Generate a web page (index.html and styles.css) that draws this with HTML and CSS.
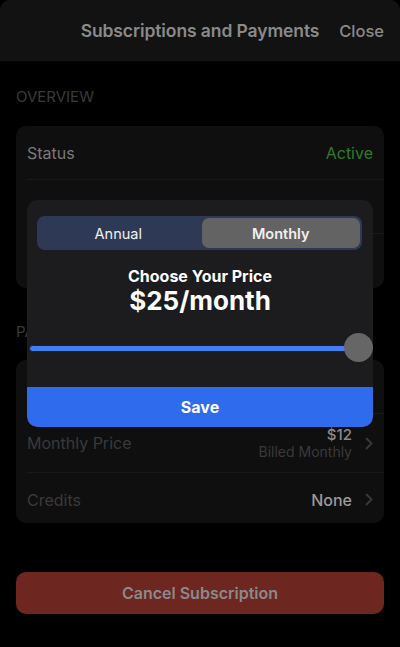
FILE: index.html
```html
<!DOCTYPE html>
<html>
<head>
<meta charset="utf-8">
<link rel="stylesheet" href="styles.css">
</head>
<body>
<div class="screen">
  <header class="topbar">
    <span></span>
    <h1 class="title">Subscriptions and Payments</h1>
    <span class="close">Close</span>
  </header>
  <main class="content">
    <div class="section-label">OVERVIEW</div>
    <div class="card">
      <div class="row"><span class="label">Status</span><span class="active">Active</span></div>
      <div class="row covered"><span class="label">Plan</span><span class="value">Premium</span></div>
      <div class="row covered"><span class="label">Renews</span><span class="value">Jan 1</span></div>
    </div>
    <div class="section-label sec2">PAYMENT</div>
    <div class="card">
      <div class="row covered"><span class="label dim">Payment Method</span><span class="value">Visa</span></div>
      <div class="row price-row">
        <span class="label dim">Monthly Price</span>
        <span class="right">
          <span class="stack"><span class="amount">$12</span><span class="billed">Billed Monthly</span></span>
          <svg class="chev" width="8" height="13" viewBox="0 0 8 13"><path d="M1.5 1.5 L6.5 6.5 L1.5 11.5" fill="none" stroke="#3a3a3a" stroke-width="1.8" stroke-linecap="round" stroke-linejoin="round"/></svg>
        </span>
      </div>
      <div class="row last-row">
        <span class="label dim">Credits</span>
        <span class="right">
          <span class="none">None</span>
          <svg class="chev" width="8" height="13" viewBox="0 0 8 13"><path d="M1.5 1.5 L6.5 6.5 L1.5 11.5" fill="none" stroke="#3a3a3a" stroke-width="1.8" stroke-linecap="round" stroke-linejoin="round"/></svg>
        </span>
      </div>
    </div>
    <button class="cancel">Cancel Subscription</button>
  </main>

  <div class="modal">
    <div class="segmented">
      <div class="seg">Annual</div>
      <div class="seg selected">Monthly</div>
    </div>
    <div class="choose">Choose Your Price</div>
    <div class="price">$25/month</div>
    <div class="slider">
      <div class="track"></div>
      <div class="thumb"></div>
    </div>
    <button class="save">Save</button>
  </div>
</div>
</body>
</html>
```
FILE: styles.css
```css
* { box-sizing: border-box; }
html, body {
  margin: 0;
  padding: 0;
  background: #000;
}
body {
  width: 400px;
  height: 647px;
  overflow: hidden;
  font-family: Inter, "Liberation Sans", sans-serif;
}
.screen {
  position: relative;
  width: 400px;
  height: 647px;
  background: #000;
}
.topbar {
  height: 61px;
  background: #121212;
  border-radius: 10px 10px 0 0;
  display: grid;
  grid-template-columns: 1fr auto 1fr;
  align-items: center;
  padding: 0 16px;
}
.title {
  margin: 0;
  font-size: 17.5px;
  font-weight: 600;
  color: #8a8a8a;
  letter-spacing: -0.1px;
}
.close {
  justify-self: end;
  font-size: 16.5px;
  color: #8a8a8a;
  font-weight: 500;
}
.content {
  padding: 0 16px;
}
.section-label {
  font-size: 15px;
  color: #3a3a3a;
  padding: 27px 0 0 0;
  height: 65px;
  line-height: 18px;
}
.sec2 { height: 72px; padding-top: 35px; }
.card {
  background: #0f0f0f;
  border-radius: 10px;
  padding-left: 11px;
  display: flex;
  flex-direction: column;
}
.row {
  display: flex;
  justify-content: space-between;
  align-items: center;
  height: 54px;
  padding-right: 11px;
  border-bottom: 1px solid #1a1a1a;
}
.row:last-child { border-bottom: none; }
.covered > * { visibility: hidden; }
.price-row { height: 59px; }
.last-row { height: 50px; padding-top: 3px; }
.label {
  font-size: 16px;
  color: #7a7a7a;
}
.label.dim { color: #3a3a3a; }
.active { font-size: 16px; color: #2e7a2e; }
.value { font-size: 16px; color: #3a3a3a; }
.right {
  display: flex;
  align-items: center;
  gap: 13px;
}
.stack {
  display: flex;
  flex-direction: column;
  align-items: flex-end;
  line-height: 17px;
}
.amount { font-size: 15px; color: #8a8a8a; font-weight: 500; }
.billed { font-size: 14px; color: #3a3a3a; }
.none { font-size: 16px; color: #9a9a9a; font-weight: 500; }
.chev { display: block; }
.cancel {
  display: block;
  width: 100%;
  height: 42px;
  margin-top: 49px;
  border: none;
  border-radius: 10px;
  background: #6d2620;
  color: #8a8a8a;
  font-family: inherit;
  font-size: 16px;
  font-weight: 600;
}
.modal {
  position: absolute;
  left: 27px;
  top: 200px;
  width: 346px;
  height: 227px;
  background: #1c1c1e;
  border-radius: 10px;
  display: flex;
  flex-direction: column;
  overflow: hidden;
}
.segmented {
  margin: 16px 11px 0 10px;
  height: 34px;
  background: #2e3a55;
  border-radius: 8px;
  padding: 2px;
  display: grid;
  grid-template-columns: 1fr 1fr;
  gap: 4px;
}
.seg {
  display: flex;
  align-items: center;
  justify-content: center;
  font-size: 14.5px;
  color: #f0f0f0;
  border-radius: 7px;
}
.seg.selected {
  background: #636363;
  font-weight: 600;
}
.choose {
  margin-top: 16px;
  text-align: center;
  font-size: 16px;
  font-weight: 700;
  color: #fff;
  line-height: 20px;
}
.price {
  text-align: center;
  font-size: 26px;
  font-weight: 700;
  color: #fff;
  line-height: 30px;
}
.slider {
  position: relative;
  height: 30px;
  margin: 17px 0 0 2px;
  width: 344px;
}
.track {
  position: absolute;
  left: 0;
  right: 20px;
  top: 12px;
  height: 7px;
  background: #3f7ff2;
  border: 1.5px solid #2a1a20;
  border-radius: 4px;
}
.thumb {
  position: absolute;
  right: 0;
  top: 0;
  width: 29px;
  height: 29px;
  border-radius: 50%;
  background: #666;
}
.save {
  margin-top: auto;
  height: 40px;
  border: none;
  background: #2f6bed;
  color: #fff;
  font-family: inherit;
  font-size: 16px;
  font-weight: 700;
  border-radius: 0 0 10px 10px;
}
```
